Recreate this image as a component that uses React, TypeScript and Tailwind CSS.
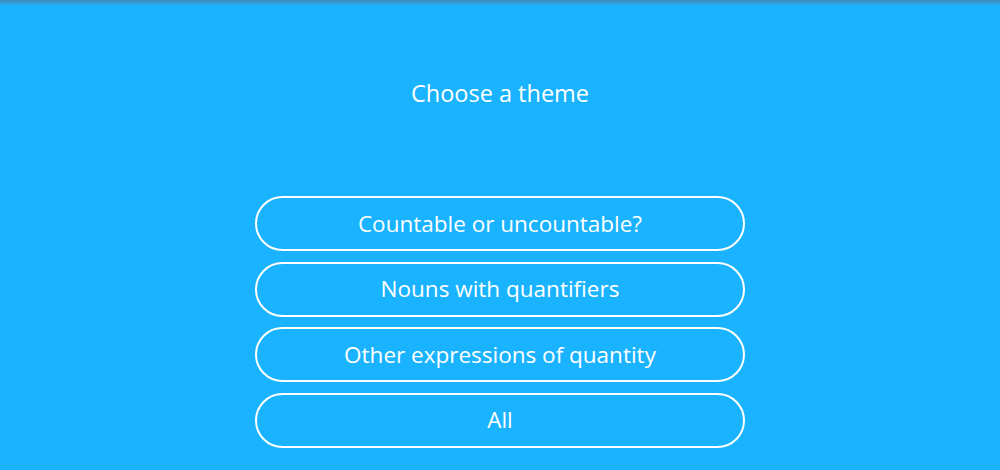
import React from "react";

const items = [
  "Countable or uncountable?",
  "Nouns with quantifiers",
  "Other expressions of quantity",
  "All",
];

export default function App() {
  return (
    <div
      className="relative h-[470px] w-full overflow-hidden bg-[#1ab3ff] text-white"
      style={{ fontFamily: '"Open Sans", sans-serif' }}
    >
      <div className="pointer-events-none absolute inset-x-0 top-0 h-[6px] bg-gradient-to-b from-[#3d89b3] to-[#1ab3ff]" />
      <div className="flex flex-col items-center">
        <h1 className="mt-[78px] text-[23.5px] leading-[30px] font-normal">Choose a theme</h1>
        <div className="mt-[88px] flex w-[490px] flex-col gap-[10.6px]">
          {items.map((t) => (
            <button
              key={t}
              className="flex h-[55px] w-full items-center justify-center rounded-full border-2 border-white text-[22.5px] text-white"
            >
              {t}
            </button>
          ))}
        </div>
      </div>
    </div>
  );
}
